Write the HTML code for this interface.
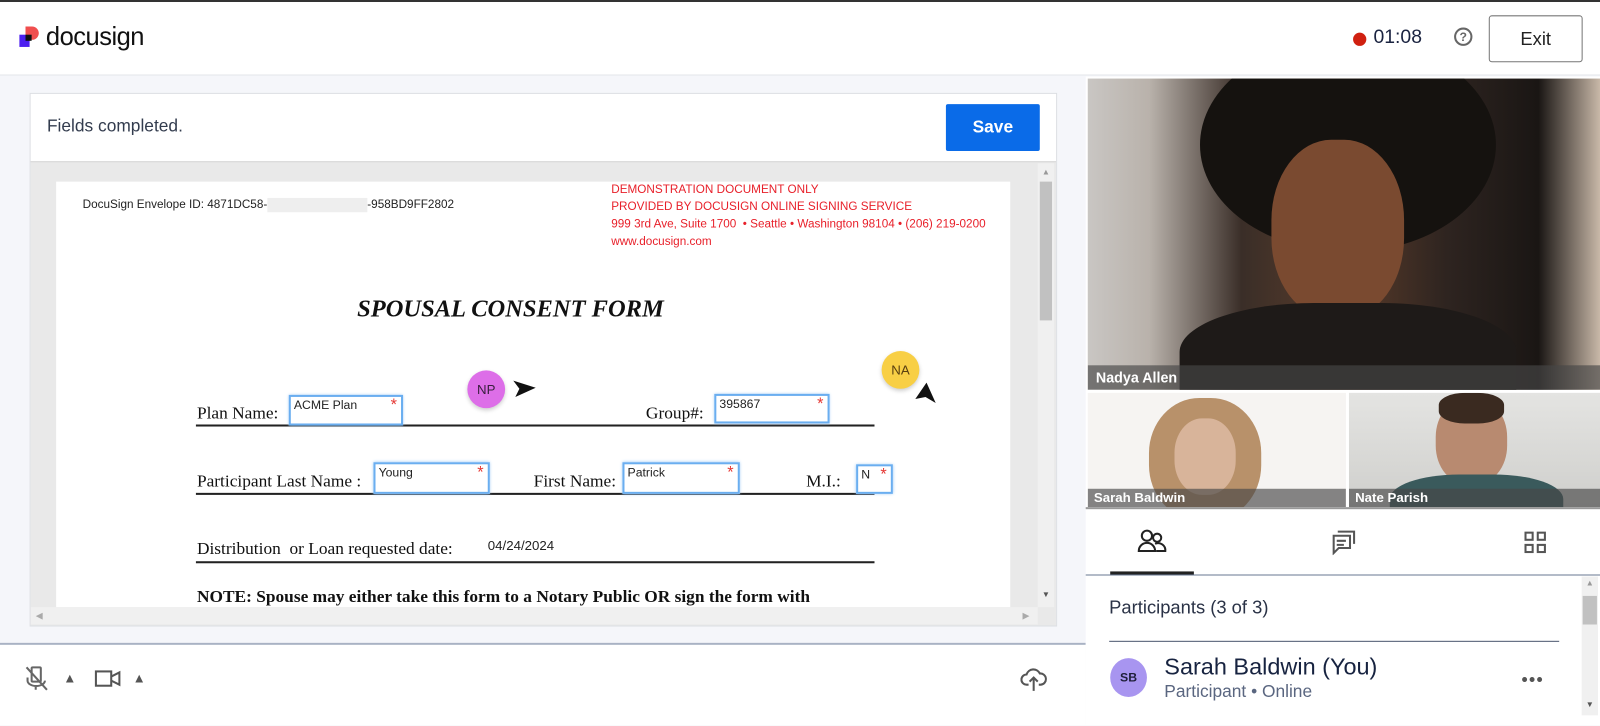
<!DOCTYPE html>
<html><head><meta charset="utf-8">
<style>
*{margin:0;padding:0;box-sizing:border-box}
html,body{width:1600px;height:711px;overflow:hidden;background:#f5f6fa}
#w{position:absolute;left:0;top:0;width:1568px;height:697px;transform:scale(1.020408);transform-origin:0 0;font-family:"Liberation Sans",sans-serif}
.a{position:absolute}
.serif{font-family:"Liberation Serif",serif;color:#111}
.fld{position:absolute;border:2px solid #6aaef0;background:#fff;font-size:12px;color:#222;padding:1px 3px;box-shadow:0 0 3px #9cc8f5}
.fld b{position:absolute;right:4px;top:0;color:#e53935;font-weight:normal;font-size:16px}
.line{position:absolute;height:2px;background:#222}
.red{color:#e8202a;font-size:11.5px;line-height:17px}
.lab{position:absolute;left:0;right:0;bottom:0;height:24px;background:rgba(70,70,70,.65);color:#fff;font-weight:bold;font-size:14px;padding:4px 8px}
</style></head><body><div id="w">
<div class="a" style="left:0;top:0;width:1568px;height:2px;background:#333"></div>
<div class="a" style="left:0;top:2px;width:1568px;height:72px;background:#fff;border-bottom:1px solid #e3e5ea"></div>
<div class="a" style="left:19px;top:34px;width:10px;height:12px;background:#4c1ff0"></div>
<div class="a" style="left:25px;top:26px;width:13px;height:13px;background:#f04e4e;border-radius:0 7px 7px 0"></div>
<div class="a" style="left:25px;top:34px;width:6px;height:6px;background:#111"></div>
<div class="a" style="left:45px;top:22px;font-size:25px;color:#111;letter-spacing:-0.5px">docusign</div>
<div class="a" style="left:1326px;top:32px;width:13px;height:13px;border-radius:50%;background:#d02010"></div>
<div class="a" style="left:1346px;top:26px;font-size:19px;color:#1a2340">01:08</div>
<div class="a" style="left:1425px;top:27px;width:18px;height:18px;border:2px solid #666;border-radius:50%;font-size:12px;font-weight:bold;color:#666;text-align:center;line-height:14px">?</div>
<div class="a" style="left:1459px;top:15px;width:92px;height:46px;border:1px solid #777;border-radius:3px;background:#fff;font-size:18px;color:#222;text-align:center;line-height:44px">Exit</div>

<div class="a" style="left:29px;top:91px;width:1007px;height:523px;background:#fff;border:1px solid #dcdee3"></div>
<div class="a" style="left:46px;top:114px;font-size:17px;color:#333c4e">Fields completed.</div>
<div class="a" style="left:927px;top:102px;width:92px;height:46px;background:#0a6be8;border-radius:2px;color:#fff;font-weight:bold;font-size:17px;text-align:center;line-height:46px">Save</div>
<div class="a" style="left:30px;top:158px;width:1005px;height:455px;background:#e9e9e9;border-top:1px solid #d6d6d6"></div>
<div class="a" style="left:55px;top:178px;width:935px;height:417px;background:#fff;overflow:hidden">
  <div class="a" style="left:26px;top:16px;font-size:11.5px;color:#222">DocuSign Envelope ID: 4871DC58-<span style="display:inline-block;width:98px;height:14px;background:#eee;vertical-align:middle"></span>-958BD9FF2802</div>
  <div class="a red" style="left:544px;top:0">DEMONSTRATION DOCUMENT ONLY<br>PROVIDED BY DOCUSIGN ONLINE SIGNING SERVICE<br>999 3rd Ave, Suite 1700 &nbsp;• Seattle • Washington 98104 • (206) 219-0200<br>www.docusign.com</div>
  <div class="a serif" style="left:295px;top:112px;font-size:24px;font-weight:bold;font-style:italic">SPOUSAL CONSENT FORM</div>
  <div class="a serif" style="left:138px;top:217px;font-size:17px">Plan Name:</div>
  <div class="a serif" style="left:578px;top:217px;font-size:17px">Group#:</div>
  <div class="line" style="left:137px;top:238px;width:665px"></div>
  <div class="a serif" style="left:138px;top:284px;font-size:17px">Participant Last Name :</div>
  <div class="a serif" style="left:468px;top:284px;font-size:17px">First Name:</div>
  <div class="a serif" style="left:735px;top:284px;font-size:17px">M.I.:</div>
  <div class="line" style="left:137px;top:305px;width:665px"></div>
  <div class="a serif" style="left:138px;top:350px;font-size:17px">Distribution &nbsp;or Loan requested date:</div>
  <div class="a" style="left:423px;top:349px;font-size:13px;color:#222">04/24/2024</div>
  <div class="line" style="left:137px;top:372px;width:665px"></div>
  <div class="a serif" style="left:138px;top:397px;font-size:17px;font-weight:bold">NOTE: Spouse may either take this form to a Notary Public OR sign the form with</div>
</div>
<div class="fld" style="left:283px;top:387px;width:112px;height:30px">ACME Plan<b>*</b></div>
<div class="fld" style="left:700px;top:386px;width:113px;height:29px">395867<b>*</b></div>
<div class="fld" style="left:366px;top:453px;width:114px;height:31px">Young<b>*</b></div>
<div class="fld" style="left:610px;top:453px;width:115px;height:31px">Patrick<b>*</b></div>
<div class="fld" style="left:839px;top:455px;width:36px;height:29px">N<b>*</b></div>
<div class="a" style="left:458px;top:363px;width:37px;height:37px;border-radius:50%;background:#dd6ee8;color:#3a2040;font-size:13px;text-align:center;line-height:37px;box-shadow:0 2px 4px rgba(0,0,0,.2)">NP</div>
<svg class="a" style="left:500px;top:370px" width="28" height="22"><path d="M3 3L25 10L5 19L9 11Z" fill="#111"/></svg>
<div class="a" style="left:864px;top:344px;width:37px;height:37px;border-radius:50%;background:#f8cf45;color:#5a4010;font-size:13px;text-align:center;line-height:37px;box-shadow:0 2px 4px rgba(0,0,0,.2)">NA</div>
<svg class="a" style="left:893px;top:372px" width="30" height="26"><path d="M15 3L24 23L14 17L4 19Z" fill="#111"/></svg>
<div class="a" style="left:1017px;top:160px;width:16px;height:435px;background:#f0f0f0"></div>
<div class="a" style="left:1019px;top:178px;width:12px;height:136px;background:#c1c1c1"></div>
<div class="a" style="left:1021px;top:164px;font-size:8px;color:#999">▲</div>
<div class="a" style="left:1021px;top:578px;font-size:8px;color:#555">▼</div>
<div class="a" style="left:30px;top:595px;width:987px;height:17px;background:#f0f0f0"></div>
<div class="a" style="left:35px;top:598px;font-size:9px;color:#aaa">◀</div>
<div class="a" style="left:1002px;top:598px;font-size:9px;color:#aaa">▶</div>

<div class="a" style="left:0;top:630px;width:1064px;height:2px;background:#a9b2c4"></div>
<div class="a" style="left:0;top:632px;width:1064px;height:79px;background:#fff"></div>
<svg class="a" style="left:24px;top:652px" width="24" height="26" fill="none" stroke="#666" stroke-width="2"><rect x="7" y="2" width="9" height="14" rx="1"/><path d="M3 12v3a8 5 0 0 0 17 0M11 20v4M2 2l20 22"/></svg>
<div class="a" style="left:62px;top:657px;font-size:13px;color:#555">▲</div>
<svg class="a" style="left:92px;top:655px" width="28" height="20" fill="none" stroke="#555" stroke-width="2"><rect x="2" y="3" width="15" height="14"/><path d="M17 8l8-4v12l-8-4"/></svg>
<div class="a" style="left:130px;top:657px;font-size:13px;color:#555">▲</div>
<svg class="a" style="left:1000px;top:651px" width="26" height="28" fill="none" stroke="#555" stroke-width="2"><path d="M8 20H6a5 5 0 0 1 0-10a7 7 0 0 1 13-1a5 5 0 0 1 1 11h-2M13 26V13M9 17l4-4l4 4"/></svg>

<div class="a" style="left:1064px;top:75px;width:504px;height:636px;background:#fff"></div>
<div class="a" style="left:1066px;top:77px;width:502px;height:305px;overflow:hidden;background:linear-gradient(90deg,#c9c6c3 0%,#b9b2ab 12%,#3a2e28 30%,#5b3c2a 50%,#2e2420 70%,#1a1614 88%,#c8b8a8 100%)">
  <div class="a" style="left:110px;top:-40px;width:290px;height:210px;border-radius:50%;background:#15120f"></div>
  <div class="a" style="left:180px;top:60px;width:130px;height:175px;border-radius:45%;background:#7a4a30"></div>
  <div class="a" style="left:90px;top:220px;width:330px;height:120px;border-radius:40% 40% 0 0;background:#1e1a18"></div>
  <div class="lab">Nadya Allen</div>
</div>
<div class="a" style="left:1066px;top:385px;width:253px;height:112px;overflow:hidden;background:#f6f4f2">
  <div class="a" style="left:60px;top:5px;width:110px;height:120px;border-radius:45%;background:#b8916a"></div>
  <div class="a" style="left:85px;top:25px;width:60px;height:75px;border-radius:45%;background:#d8b49a"></div>
  <div class="lab" style="height:18px;font-size:13px;padding:1px 6px">Sarah Baldwin</div>
</div>
<div class="a" style="left:1322px;top:385px;width:246px;height:112px;overflow:hidden;background:linear-gradient(180deg,#e4e4e2,#cfcfcc)">
  <div class="a" style="left:85px;top:5px;width:70px;height:85px;border-radius:45%;background:#b88a70"></div>
  <div class="a" style="left:88px;top:0;width:64px;height:30px;border-radius:40%;background:#3a2a20"></div>
  <div class="a" style="left:40px;top:80px;width:170px;height:60px;border-radius:40% 40% 0 0;background:#3a5a5c"></div>
  <div class="lab" style="height:18px;font-size:13px;padding:1px 6px">Nate Parish</div>
</div>
<div class="a" style="left:1064px;top:497px;width:504px;height:2px;background:#999"></div>
<svg class="a" style="left:1114px;top:518px" width="30" height="24" fill="none" stroke="#222" stroke-width="2"><circle cx="10" cy="7" r="5"/><path d="M2 22a8 8 0 0 1 16 0z"/><circle cx="20" cy="9" r="4"/><path d="M19 22h9a7 7 0 0 0-10-7"/></svg>
<div class="a" style="left:1088px;top:560px;width:82px;height:3px;background:#222"></div>
<svg class="a" style="left:1304px;top:518px" width="26" height="26" fill="none" stroke="#555" stroke-width="2"><path d="M2 7h17v12H8l-5 5V7zM7 3h16v12M6 12h9M6 16h7"/></svg>
<svg class="a" style="left:1493px;top:520px" width="24" height="24" fill="none" stroke="#555" stroke-width="2"><rect x="2" y="2" width="7" height="7"/><rect x="14" y="2" width="7" height="7"/><rect x="2" y="14" width="7" height="7"/><rect x="14" y="14" width="7" height="7"/></svg>
<div class="a" style="left:1064px;top:563px;width:504px;height:1px;background:#6a7a94"></div>
<div class="a" style="left:1087px;top:585px;font-size:18px;color:#2a3246">Participants (3 of 3)</div>
<div class="a" style="left:1087px;top:628px;width:441px;height:1px;background:#4a566e"></div>
<div class="a" style="left:1088px;top:645px;width:36px;height:38px;border-radius:50%;background:#a895f0;color:#1f1f3a;font-weight:bold;font-size:12px;text-align:center;line-height:38px">SB</div>
<div class="a" style="left:1141px;top:640px;font-size:23px;color:#172340">Sarah Baldwin (You)</div>
<div class="a" style="left:1141px;top:668px;font-size:17px;color:#5a6680">Participant • Online</div>
<div class="a" style="left:1491px;top:656px;font-size:18px;color:#555;letter-spacing:1px">•••</div>
<div class="a" style="left:1550px;top:565px;width:16px;height:136px;background:#f0f0f0"></div>
<div class="a" style="left:1551px;top:584px;width:14px;height:28px;background:#c1c1c1"></div>
<div class="a" style="left:1554px;top:567px;font-size:8px;color:#999">▲</div>
<div class="a" style="left:1554px;top:686px;font-size:8px;color:#555">▼</div>
</div></body></html>
